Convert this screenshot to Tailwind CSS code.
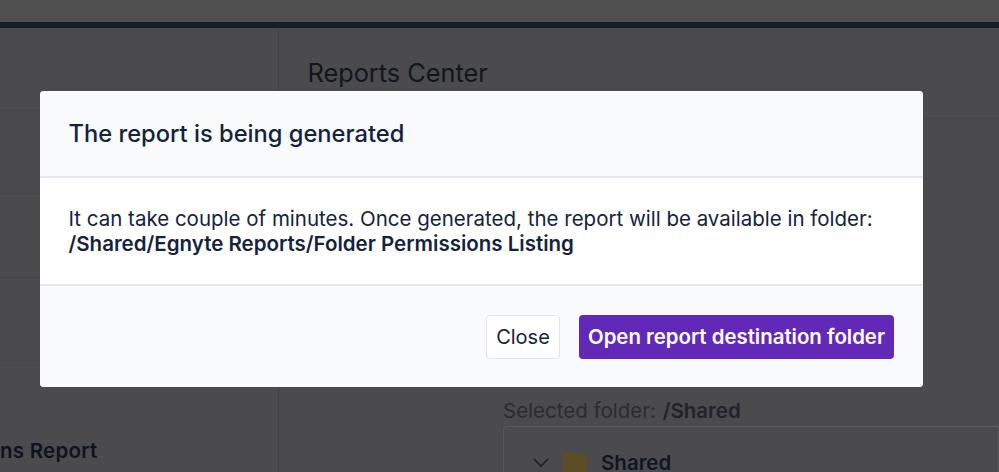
<!DOCTYPE html>
<html>
<head>
<meta charset="utf-8">
<script src="https://cdn.jsdelivr.net/npm/@tailwindcss/browser@4"></script>
</head>
<body class="m-0">
<div class="relative w-[999px] h-[472px] overflow-hidden bg-[#4b4a4d] font-['Inter',sans-serif] text-[#0f1a2a]">
  <!-- background page -->
  <div class="h-[22px] bg-[#505050]"></div>
  <div class="h-[6px] bg-[#14202a]"></div>
  <div class="flex h-[444px]">
    <aside class="w-[279px] shrink-0 border-r border-[#424247] flex flex-col">
      <div class="h-[83px] shrink-0 border-b border-[#444448]"></div>
      <div class="h-[83px] shrink-0 border-b border-[#444448]"></div>
      <div class="h-[84px] shrink-0 border-b border-[#444448]"></div>
      <div class="h-[83px] shrink-0 border-b border-[#444448]"></div>
      <div class="pt-[77px] whitespace-nowrap text-[20.5px] leading-[25px] font-semibold text-[#0c1420] tracking-[0.25px]">ns Report</div>
    </aside>
    <main class="flex-1 flex flex-col">
      <div class="h-[91px] shrink-0 pl-[28.5px] pt-[30px] border-b border-[#444448] text-[25.3px] leading-[30px] text-[#11161f]">Reports Center</div>
      <div class="pl-[224px] pt-[279px]">
        <div class="text-[20.5px] leading-[25px] text-[#2c2c30] whitespace-nowrap">Selected folder: <span class="ml-[1px] font-semibold text-[#22232a]">/Shared</span></div>
        <div class="mt-[3px] h-[74px] border border-[#5a5a5e] rounded-l-[4px] flex items-center pl-[29px]">
          <svg class="shrink-0" width="16" height="10" viewBox="0 0 16 10" fill="none" stroke="#1c2129" stroke-width="1.6"><path d="M1 1l7 7 7-7"/></svg>
          <svg class="shrink-0 ml-[14px]" width="24" height="22" viewBox="0 0 24 22"><path d="M0 2a2 2 0 0 1 2-2h8l3 2h9a2 2 0 0 1 2 2v16a2 2 0 0 1-2 2H2a2 2 0 0 1-2-2z" fill="#5d4d27"/></svg>
          <span class="ml-[14px] text-[20.5px] font-semibold text-[#11161f]">Shared</span>
        </div>
      </div>
    </main>
  </div>

  <!-- modal -->
  <div class="absolute left-[40px] top-[91px] w-[883px] h-[296px] rounded-[4px] overflow-hidden bg-white flex flex-col text-[#14233c]">
    <div class="h-[87px] bg-[#f9fafc] border-b-2 border-[#e4e7f2] pl-[28.5px] pt-[1px] flex items-center">
      <h2 class="text-[23.7px] leading-[28px] font-medium">The report is being generated</h2>
    </div>
    <div class="h-[108px] bg-white border-b-2 border-[#e4e7f2] pl-[28.5px] pt-[28px] text-[20.5px] leading-[25px]">
      <p>It can take couple of minutes. Once generated, the report will be available in folder:</p>
      <p class="font-semibold">/Shared/Egnyte Reports/Folder Permissions Listing</p>
    </div>
    <div class="flex-1 bg-[#f9fafc] flex items-center justify-end gap-[19px] pr-[29px]">
      <button class="h-[44px] w-[74px] bg-white border border-[#e1e4ef] rounded-[4px] text-[20px] text-[#14233c]">Close</button>
      <button class="h-[44px] w-[315px] pt-[1px] bg-[#6229b9] rounded-[4px] text-[20.4px] font-semibold text-white whitespace-nowrap">Open report destination folder</button>
    </div>
  </div>
</div>
</body>
</html>
